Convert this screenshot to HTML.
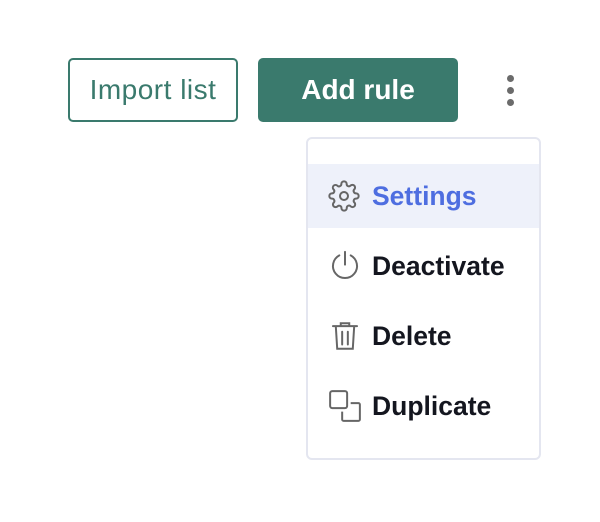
<!DOCTYPE html>
<html><head><style>
body{margin:0;width:600px;height:522px;background:#fff;font-family:"Liberation Sans",sans-serif;position:relative;overflow:hidden}
.btn{position:absolute;top:58px;height:64px;box-sizing:border-box;border-radius:5px;display:flex;align-items:center;justify-content:center}
.imp{left:68px;width:170px;border:2px solid #3a7a6d;color:#3a7a6d;font-size:28px;letter-spacing:0.5px}
.add{left:258px;width:200px;background:#3a7a6d;color:#fff;font-weight:bold;font-size:28px}
.dot{position:absolute;left:507px;width:7px;height:7px;border-radius:50%;background:#6b6b6b}
.menu{position:absolute;left:306px;top:137px;width:235px;height:323px;box-sizing:border-box;border:2px solid #e4e6f0;border-radius:6px;background:#fff}
.item{position:absolute;left:0;right:0;height:64px;display:flex;align-items:center;font-weight:bold;font-size:26.5px;color:#14161f}
.item svg{position:absolute;left:20px}
.item span{position:absolute;left:64px}
</style></head><body>
<div class="btn imp">Import list</div>
<div class="btn add">Add rule</div>
<div class="dot" style="top:75px"></div><div class="dot" style="top:87px"></div><div class="dot" style="top:99px"></div>
<div class="menu">
<div class="item" style="top:25px;background:#eef1fa;color:#4e6ee0"><svg width="32" height="32" viewBox="0 0 24 24" fill="none" stroke="#666" stroke-width="1.5"><circle cx="12" cy="12" r="3"/><path d="M19.4 15a1.65 1.65 0 0 0 .33 1.82l.06.06a2 2 0 1 1-2.83 2.83l-.06-.06a1.65 1.65 0 0 0-1.820-.33 1.65 1.65 0 0 0-1 1.51V21a2 2 0 1 1-4 0v-.09A1.65 1.65 0 0 0 9 19.4a1.65 1.65 0 0 0-1.82.33l-.06.06a2 2 0 1 1-2.83-2.83l.06-.06A1.65 1.65 0 0 0 4.6 15a1.65 1.65 0 0 0-1.51-1H3a2 2 0 1 1 0-4h.09A1.65 1.65 0 0 0 4.6 9a1.65 1.65 0 0 0-.33-1.82l-.06-.06a2 2 0 1 1 2.830-2.83l.06.06A1.65 1.65 0 0 0 9 4.6a1.65 1.65 0 0 0 1-1.51V3a2 2 0 1 1 4 0v.09a1.65 1.65 0 0 0 1 1.51 1.65 1.65 0 0 0 1.82-.33l.06-.06a2 2 0 1 1 2.83 2.83l-.06.06A1.65 1.65 0 0 0 19.4 9a1.650 1.650 0 0 0 1.51 1H21a2 2 0 1 1 0 4h-.09a1.65 1.65 0 0 0-1.51 1z"/></svg><span>Settings</span></div>
<div class="item" style="top:95px"><svg width="34" height="34" viewBox="0 0 24 24" fill="none" stroke="#666" stroke-width="1.4" stroke-linecap="round"><path d="M8 4.5A8.5 8.5 0 1 0 16 4.5"/><path d="M12 2v9"/></svg><span>Deactivate</span></div>
<div class="item" style="top:165px"><svg width="34" height="34" viewBox="0 0 24 24" fill="none" stroke="#666" stroke-width="1.4" stroke-linecap="round"><path d="M3.5 5h17M9 5V3h6v2M5.5 5l1 16h11l1-16M10 9v9M14 9v9"/></svg><span>Delete</span></div>
<div class="item" style="top:235px"><svg width="34" height="34" viewBox="0 0 24 24" fill="none" stroke="#666" stroke-width="1.4"><rect x="1.5" y="1.5" width="12" height="12" rx="1.5"/><path d="M16 10h5.5a1 1 0 0 1 1 1v10.5a1 1 0 0 1-1 1H11a1 1 0 0 1-1-1V16"/></svg><span>Duplicate</span></div>
</div>
</body></html>
